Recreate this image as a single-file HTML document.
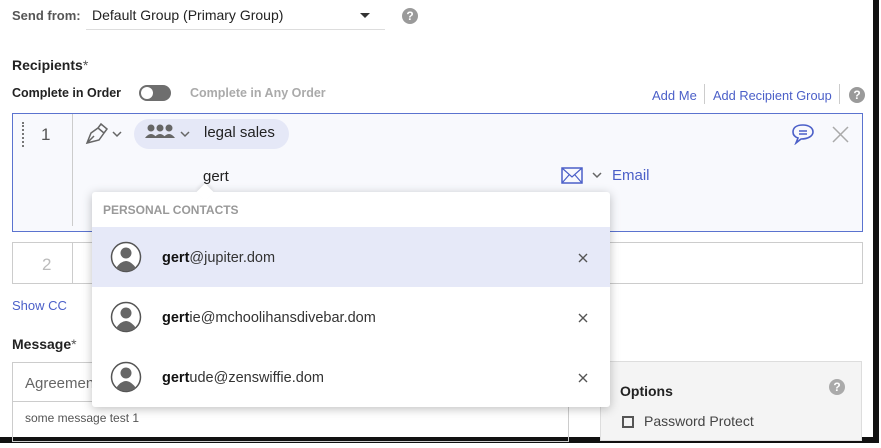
<!DOCTYPE html>
<html><head><meta charset="utf-8"><style>
*{box-sizing:border-box;margin:0;padding:0}
body{width:881px;height:448px;overflow:hidden;background:#fff;font-family:"Liberation Sans",sans-serif;position:relative;color:#222}
.a{position:absolute;white-space:nowrap}
.help{position:absolute;width:16px;height:16px;border-radius:50%;background:#9a9a9a;color:#fff;font-size:12px;font-weight:bold;text-align:center;line-height:16px}
.blue{color:#4b5fc8}
</style></head><body>
<div class="a" style="left:0;top:0;width:873px;height:437px;background:#fff;box-shadow:3px 3px 0 3px #111"></div>
<div class="a" style="left:12px;top:8px;font-size:13px;font-weight:bold;color:#555">Send from:</div>
<div class="a" style="left:92px;top:7px;font-size:14px;color:#222">Default Group (Primary Group)</div>
<div class="a" style="left:86px;top:29px;width:299px;height:1px;background:#ddd"></div>
<div class="a" style="left:360px;top:13px;border:5px solid transparent;border-top:5px solid #333"></div>
<div class="help" style="left:402px;top:8px">?</div>

<div class="a" style="left:12px;top:57px;font-size:14px;font-weight:bold">Recipients<span style="font-weight:normal;color:#555">*</span></div>
<div class="a" style="left:12px;top:86px;font-size:12.5px;font-weight:bold">Complete in Order</div>
<div class="a" style="left:139px;top:85px;width:32px;height:16px;border-radius:8px;background:#6e6e6e"></div>
<div class="a" style="left:141px;top:87px;width:12px;height:12px;border-radius:50%;background:#fff"></div>
<div class="a" style="left:190px;top:86px;font-size:12.5px;font-weight:bold;color:#aaa">Complete in Any Order</div>
<div class="a blue" style="left:652px;top:88px;font-size:13px">Add Me</div>
<div class="a" style="left:704px;top:84px;width:1px;height:20px;background:#ccc"></div>
<div class="a blue" style="left:713px;top:88px;font-size:12.8px">Add Recipient Group</div>
<div class="a" style="left:839px;top:84px;width:1px;height:20px;background:#ccc"></div>
<div class="help" style="left:849px;top:87px">?</div>

<div class="a" style="left:12px;top:113px;width:851px;height:119px;border:1px solid #5b73cf;background:#f8f9fd"></div>
<div class="a" style="left:22px;top:122px;width:0;height:25px;border-left:2px dotted #777"></div>
<div class="a" style="left:41px;top:125px;font-size:17px;color:#555">1</div>
<div class="a" style="left:72px;top:114px;width:1px;height:112px;background:#ccc"></div>
<svg class="a" style="left:84px;top:122px" width="42" height="24" viewBox="0 0 42 24"><path d="M3 21 L7 11 L14 6 L20 11 L15 18 Z M3 21 L10 14 M14 6 L17 2 L23 7 L20 11" fill="none" stroke="#666" stroke-width="1.5"/><path d="M29 10 l4 4 l4 -4" fill="none" stroke="#666" stroke-width="1.5"/></svg>
<div class="a" style="left:134px;top:119px;width:155px;height:30px;border-radius:15px;background:#e5e8f7"></div>
<svg class="a" style="left:144px;top:123px" width="50" height="20" viewBox="0 0 50 20"><g fill="#666"><circle cx="7" cy="5" r="3.5"/><path d="M1 15 q6 -8 12 0z"/><circle cx="16" cy="5" r="3.5"/><path d="M10 15 q6 -8 12 0z"/><circle cx="25" cy="5" r="3.5"/><path d="M19 15 q6 -8 12 0z"/></g><path d="M37 9 l4 4 l4 -4" fill="none" stroke="#666" stroke-width="1.5"/></svg>
<div class="a" style="left:204px;top:124px;font-size:15px">legal sales</div>
<svg class="a" style="left:791px;top:123px" width="24" height="22" viewBox="0 0 24 22"><path d="M12 2 C5 2 2 5 2 9 C2 12 4 14 7 15 L5 20 L10 16 C17 16 22 13 22 9 C22 5 18 2 12 2Z" fill="none" stroke="#4b5fc8" stroke-width="1.6"/><path d="M8 8h8M8 11h8" stroke="#4b5fc8" stroke-width="1.4"/></svg>
<svg class="a" style="left:832px;top:126px" width="17" height="17"><path d="M1 1L16 16M16 1L1 16" stroke="#aaa" stroke-width="1.5"/></svg>
<div class="a" style="left:203px;top:168px;font-size:15px">gert</div>
<svg class="a" style="left:561px;top:167px" width="46" height="18"><rect x="1" y="1" width="20" height="15" fill="none" stroke="#4b5fc8" stroke-width="1.5"/><path d="M1 1 L11 10 L21 1 M1 16 L8 8 M21 16 L14 8" fill="none" stroke="#4b5fc8" stroke-width="1.2"/><path d="M32 6 l4 4 l4 -4" fill="none" stroke="#666" stroke-width="1.5"/></svg>
<div class="a blue" style="left:612px;top:167px;font-size:15px">Email</div>

<div class="a" style="left:12px;top:242px;width:851px;height:42px;border:1px solid #ccc"></div>
<div class="a" style="left:42px;top:255px;font-size:17px;color:#bbb">2</div>
<div class="a" style="left:72px;top:243px;width:1px;height:40px;background:#ccc"></div>
<div class="a blue" style="left:12px;top:298px;font-size:13px">Show CC</div>

<div class="a" style="left:12px;top:336px;font-size:14px;font-weight:bold">Message<span style="font-weight:normal;color:#555">*</span></div>
<div class="a" style="left:12px;top:362px;width:557px;height:80px;border:1px solid #ccc"></div>
<div class="a" style="left:13px;top:401px;width:555px;height:1px;background:#ccc"></div>
<div class="a" style="left:25px;top:375px;font-size:15px;color:#666">Agreement</div>
<div class="a" style="left:25px;top:411px;font-size:12px;color:#555">some message test 1</div>
<div class="a" style="left:600px;top:361px;width:262px;height:80px;border:1px solid #ddd;background:#f4f4f4"></div>
<div class="a" style="left:620px;top:383px;font-size:14px;font-weight:bold">Options</div>
<div class="help" style="left:829px;top:379px;background:#aaa">?</div>
<div class="a" style="left:622px;top:416px;width:12px;height:12px;border:2px solid #555"></div>
<div class="a" style="left:644px;top:413px;font-size:14px;color:#444">Password Protect</div>

<div class="a" style="left:92px;top:192px;width:518px;height:215px;background:#fff;border-radius:3px;box-shadow:0 2px 10px rgba(0,0,0,.25)"></div>
<div class="a" style="left:199px;top:186px;width:12px;height:12px;background:#fff;transform:rotate(45deg);box-shadow:-2px -2px 3px rgba(0,0,0,.08)"></div>
<div class="a" style="left:103px;top:203px;font-size:12px;font-weight:bold;color:#999">PERSONAL CONTACTS</div>
<div class="a" style="left:92px;top:227px;width:518px;height:60px;background:#e6e9f8"></div>
<svg class="a" style="left:110px;top:241px" width="32" height="32"><circle cx="16" cy="16" r="14.5" fill="#fff" stroke="#555" stroke-width="1.5"/><circle cx="16" cy="12" r="5.5" fill="#666"/><path d="M6 27 q10 -14 20 0 q-10 6 -20 0z" fill="#666"/></svg>
<svg class="a" style="left:110px;top:301px" width="32" height="32"><circle cx="16" cy="16" r="14.5" fill="#fff" stroke="#555" stroke-width="1.5"/><circle cx="16" cy="12" r="5.5" fill="#666"/><path d="M6 27 q10 -14 20 0 q-10 6 -20 0z" fill="#666"/></svg>
<svg class="a" style="left:110px;top:361px" width="32" height="32"><circle cx="16" cy="16" r="14.5" fill="#fff" stroke="#555" stroke-width="1.5"/><circle cx="16" cy="12" r="5.5" fill="#666"/><path d="M6 27 q10 -14 20 0 q-10 6 -20 0z" fill="#666"/></svg>
<div class="a" style="left:162px;top:250px;font-size:14.5px;color:#333"><b style="color:#111">gert</b>@jupiter.dom</div>
<div class="a" style="left:162px;top:310px;font-size:14.5px;color:#333"><b style="color:#111">gert</b>ie@mchoolihansdivebar.dom</div>
<div class="a" style="left:162px;top:370px;font-size:14.5px;color:#333"><b style="color:#111">gert</b>ude@zenswiffie.dom</div>
<svg class="a" style="left:578px;top:253px" width="10" height="10"><path d="M1 1L9 9M9 1L1 9" stroke="#555" stroke-width="1.4"/></svg>
<svg class="a" style="left:578px;top:313px" width="10" height="10"><path d="M1 1L9 9M9 1L1 9" stroke="#555" stroke-width="1.4"/></svg>
<svg class="a" style="left:578px;top:373px" width="10" height="10"><path d="M1 1L9 9M9 1L1 9" stroke="#555" stroke-width="1.4"/></svg>
</body></html>
